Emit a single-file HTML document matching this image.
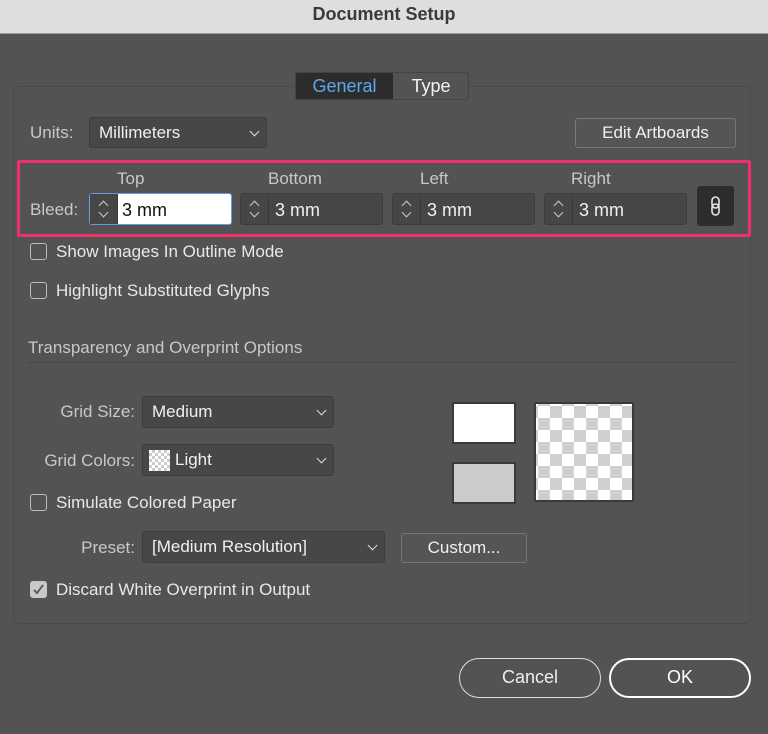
<!DOCTYPE html>
<html><head><style>
*{box-sizing:border-box;margin:0;padding:0}
body{width:768px;height:734px;background:#535353;font-family:"Liberation Sans",sans-serif;color:#e8e8e8;position:relative;overflow:hidden;font-size:17px}
.a{position:absolute}
.t{position:absolute;white-space:nowrap;line-height:20px}
.lbl{color:#c8c8c8}
.dd{position:absolute;background:#474747;border:1px solid #3c3c3c;border-radius:3px}
.dd .v{position:absolute;left:9px;top:5px;line-height:20px;color:#f0f0f0}
.dd .c{position:absolute;right:8px;top:10px;width:7px;height:7px;border-right:1.5px solid #ddd;border-bottom:1.5px solid #ddd;transform:rotate(45deg)}
.btn{position:absolute;border:1px solid #777;border-radius:3px;background:#555;text-align:center;line-height:28px;color:#f0f0f0}
.fld{position:absolute;height:32px;background:#464646;border:1px solid #3c3c3c;border-radius:3px}
.fld .sp{position:absolute;left:0;top:0;width:28px;height:100%;border-right:1px solid #3a3a3a}
.fld .sp:before,.fld .sp:after{content:"";position:absolute;left:10px;width:6px;height:6px;border-left:1.3px solid #ccc;border-top:1.3px solid #ccc}
.fld .sp:before{top:8px;transform:rotate(45deg)}
.fld .sp:after{top:15px;transform:rotate(-135deg)}
.fld .v{position:absolute;left:34px;top:6px;line-height:20px;color:#f0f0f0;font-size:18px}
.cb{position:absolute;width:17px;height:17px;border:1.3px solid #bbb;border-radius:3px}
</style></head><body>
<div class="a" style="left:0;top:0;width:768px;height:34px;background:#dedede;border-bottom:1px solid #9a9a9a"></div>
<div class="t" style="left:0;width:768px;top:4px;text-align:center;font-weight:bold;color:#3a3a3a;font-size:18px">Document Setup</div>

<div class="a" style="left:13px;top:86px;width:738px;height:538px;border:1px solid #4a4a4a;border-radius:4px"></div>
<div class="a" style="left:295px;top:72px;width:174px;height:28px;background:#535353;border:1px solid #444;border-radius:3px"></div>
<div class="a" style="left:296px;top:73px;width:97px;height:26px;background:#2c2c2c"></div>
<div class="t" style="left:296px;width:97px;top:76px;text-align:center;color:#5aa9f0;font-size:18px">General</div>
<div class="t" style="left:393px;width:76px;top:76px;text-align:center;color:#f4f4f4;font-size:18px">Type</div>

<div class="t lbl" style="left:30px;top:123px">Units:</div>
<div class="dd" style="left:89px;top:117px;width:178px;height:31px"><div class="v">Millimeters</div><div class="c"></div></div>
<div class="btn" style="left:575px;top:118px;width:161px;height:30px">Edit Artboards</div>

<div class="a" style="left:17px;top:160px;width:734px;height:77px;border:3px solid #f0306e;border-radius:2px"></div>
<div class="t lbl" style="left:117px;top:169px">Top</div>
<div class="t lbl" style="left:268px;top:169px">Bottom</div>
<div class="t lbl" style="left:420px;top:169px">Left</div>
<div class="t lbl" style="left:571px;top:169px">Right</div>
<div class="t lbl" style="left:30px;top:200px">Bleed:</div>
<div class="fld" style="left:89px;top:193px;width:143px;border:1.5px solid #5d9fe0;background:#fff"><div class="sp" style="background:#464646"></div><div class="v" style="color:#111;left:32px">3 mm</div></div>
<div class="fld" style="left:240px;top:193px;width:143px"><div class="sp"></div><div class="v">3 mm</div></div>
<div class="fld" style="left:392px;top:193px;width:143px"><div class="sp"></div><div class="v">3 mm</div></div>
<div class="fld" style="left:544px;top:193px;width:143px"><div class="sp"></div><div class="v">3 mm</div></div>
<div class="a" style="left:697px;top:186px;width:37px;height:40px;background:#2d2d2d;border-radius:3px">
<svg width="37" height="40"><rect x="15" y="11" width="7" height="11" rx="3.5" fill="none" stroke="#e6e6e6" stroke-width="1.6"/><rect x="15" y="18" width="7" height="11" rx="3.5" fill="none" stroke="#e6e6e6" stroke-width="1.6"/></svg></div>

<div class="cb" style="left:30px;top:243px"></div>
<div class="t" style="left:56px;top:242px">Show Images In Outline Mode</div>
<div class="cb" style="left:30px;top:282px"></div>
<div class="t" style="left:56px;top:281px">Highlight Substituted Glyphs</div>

<div class="t lbl" style="left:28px;top:338px">Transparency and Overprint Options</div>
<div class="a" style="left:28px;top:362px;width:709px;height:1px;background:#474747"></div>

<div class="t lbl" style="left:0;width:135px;text-align:right;top:402px">Grid Size:</div>
<div class="dd" style="left:142px;top:396px;width:192px;height:32px"><div class="v">Medium</div><div class="c"></div></div>
<div class="t lbl" style="left:0;width:135px;text-align:right;top:451px">Grid Colors:</div>
<div class="dd" style="left:142px;top:444px;width:192px;height:32px">
<div class="a" style="left:6px;top:5px;width:21px;height:21px;background:repeating-conic-gradient(#ccc 0 25%,#fff 0 50%) 0 0/6px 6px"></div>
<div class="v" style="left:32px">Light</div><div class="c"></div></div>

<div class="a" style="left:452px;top:402px;width:64px;height:42px;background:#fff;border:2px solid #3a3a3a"></div>
<div class="a" style="left:452px;top:462px;width:64px;height:42px;background:#cbcbcb;border:2px solid #3a3a3a"></div>
<div class="a" style="left:534px;top:402px;width:100px;height:100px;border:2px solid #3a3a3a;background:repeating-conic-gradient(#cfcfcf 0 25%,#fff 0 50%) 2px 2px/24px 24px"></div>

<div class="cb" style="left:30px;top:494px"></div>
<div class="t" style="left:56px;top:493px">Simulate Colored Paper</div>

<div class="t lbl" style="left:0;width:135px;text-align:right;top:538px">Preset:</div>
<div class="dd" style="left:142px;top:531px;width:243px;height:32px"><div class="v">[Medium Resolution]</div><div class="c"></div></div>
<div class="btn" style="left:401px;top:533px;width:126px;height:30px">Custom...</div>

<div class="cb" style="left:30px;top:581px;background:#c8c8c8;border-color:#c8c8c8">
<svg width="15" height="15" style="position:absolute;left:0;top:0"><path d="M3 8l3 3 6-8" fill="none" stroke="#555" stroke-width="1.8"/></svg></div>
<div class="t" style="left:56px;top:580px">Discard White Overprint in Output</div>

<div class="a" style="left:459px;top:658px;width:142px;height:40px;border:1.5px solid #ddd;border-radius:20px;text-align:center;line-height:37px;font-size:18px;color:#eee">Cancel</div>
<div class="a" style="left:609px;top:658px;width:142px;height:40px;border:2.5px solid #fff;border-radius:20px;text-align:center;line-height:35px;font-size:18px;color:#fff">OK</div>
</body></html>
